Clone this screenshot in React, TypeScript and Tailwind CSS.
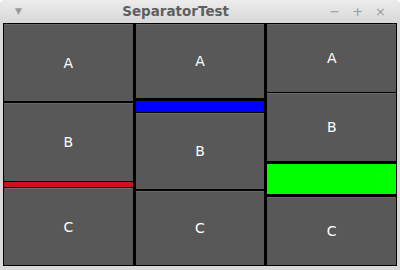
import React from 'react';

type Cell = { label?: string; h: number; color?: string };

const columns: { cells: Cell[]; gaps: number[] }[] = [
  {
    cells: [
      { label: 'A', h: 77 },
      { label: 'B', h: 78 },
      { h: 5, color: 'bg-[#c8141e]' },
      { label: 'C', h: 77 },
    ],
    gaps: [2, 1, 1],
  },
  {
    cells: [
      { label: 'A', h: 74 },
      { h: 11, color: 'bg-[#0000ff]' },
      { label: 'B', h: 76 },
      { label: 'C', h: 74 },
    ],
    gaps: [3, 1, 2],
  },
  {
    cells: [
      { label: 'A', h: 68 },
      { label: 'B', h: 68 },
      { h: 30, color: 'bg-[#00ff00]' },
      { label: 'C', h: 68 },
    ],
    gaps: [1, 3, 3],
  },
];

const Column: React.FC<{ cells: Cell[]; gaps: number[] }> = ({ cells, gaps }) => (
  <div className="flex-1 flex flex-col">
    {cells.map((c, i) => (
      <React.Fragment key={i}>
        {c.label ? (
          <div
            className="flex items-center justify-center bg-[#585858] border-t border-[#6a6a6a] text-white text-[14px]"
            style={{ height: c.h }}
          >
            {c.label}
          </div>
        ) : (
          <div className={c.color} style={{ height: c.h }} />
        )}
        {i < gaps.length && <div style={{ height: gaps[i] }} />}
      </React.Fragment>
    ))}
  </div>
);

export default function App() {
  return (
    <div className="w-[400px] h-[270px] bg-[#d9d9d9] rounded-t-[5px] overflow-hidden flex flex-col font-['DejaVu_Sans',sans-serif]">
      {/* title bar */}
      <div className="h-[23px] flex items-center px-[14px] bg-gradient-to-b from-[#ececec] to-[#d8d8d8] text-[#9a9a9a]">
        <span className="w-[10px] text-[9px] leading-none pl-[1px]">▼</span>
        <div className="flex-1 text-center font-bold text-[13.5px] text-[#5f5f5f] pr-[2px]">SeparatorTest</div>
        <div className="flex items-center gap-[12px] text-[13px] leading-none">
          <span>−</span>
          <span>+</span>
          <span>×</span>
        </div>
      </div>
      {/* content */}
      <div className="mx-[3px] h-[243px] bg-black p-[1px] flex gap-[3px]">
        {columns.map((col, i) => (
          <Column key={i} cells={col.cells} gaps={col.gaps} />
        ))}
      </div>
    </div>
  );
}
